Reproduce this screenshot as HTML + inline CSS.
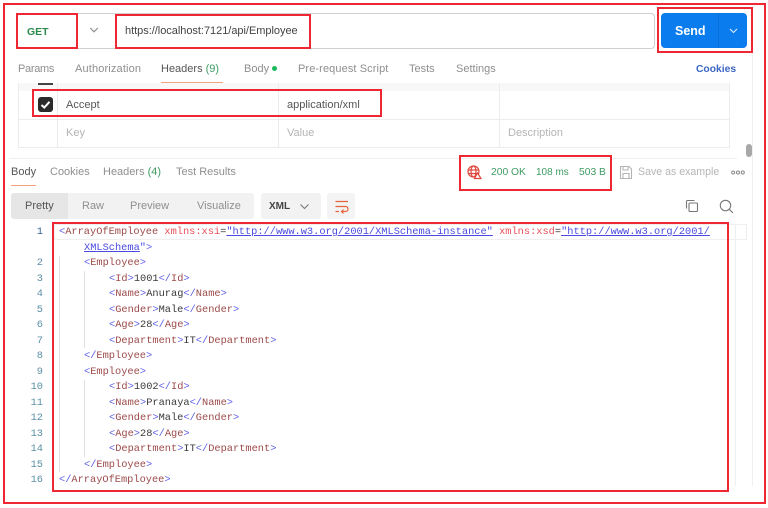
<!DOCTYPE html>
<html><head><meta charset="utf-8"><style>
html,body{margin:0;padding:0;background:#fff}
#p{position:relative;width:768px;height:508px;overflow:hidden;background:#fff;font-family:"Liberation Sans",sans-serif;font-size:11px;color:#6b6b6b;filter:blur(.3px)}
#p div,#p span.a{position:absolute;white-space:nowrap;box-sizing:border-box}
.r{border:2px solid #ee2733}
.t{line-height:14px;height:14px}
.g{color:#8f8f8f}
.l{left:0;width:43px;text-align:right;font:10.33px/15.5px "Liberation Mono",monospace;color:#5b8fa5;height:16px}
.c{font:10.33px/15.5px "Liberation Mono",monospace;height:16px;color:#3a3a3a}
.b{color:#5c5ce6}.n{color:#9c4a4a}.x{color:#e8505a}
.u{color:#4a4ae0;text-decoration:underline}
.h{background:#e6e6e6}
</style></head><body><div id="p">

<!-- URL bar -->
<div style="left:17px;top:13px;width:638px;height:36px;border:1px solid #d0d0d0;border-radius:4px"></div>
<div class="t" style="left:27px;top:24.5px;color:#2d8a4e;font-weight:bold;font-size:10.5px">GET</div>
<svg style="position:absolute;left:89px;top:27px" width="10" height="7"><path d="M1.2 1L5 4.8L8.8 1" fill="none" stroke="#8a8a8a" stroke-width="1.1"/></svg>
<div class="t" style="left:125px;top:24px;color:#444;font-size:11px;letter-spacing:-.03px">https://localhost:7121/api/Employee</div>

<!-- Send -->
<div style="left:661px;top:13px;width:86px;height:35px;background:#0b7ced;border-radius:4px"></div>
<div style="left:718px;top:13px;width:1px;height:35px;background:#0a6fd6"></div>
<div class="t" style="left:675px;top:24px;color:#fff;font-weight:bold;font-size:12.5px">Send</div>
<svg style="position:absolute;left:728px;top:27px" width="11" height="8"><path d="M2 2L5.5 5.5L9 2" fill="none" stroke="#dbeafc" stroke-width="1.1"/></svg>

<!-- Tabs -->
<div class="t g" style="left:18px;top:62px;letter-spacing:-.3px">Params</div>
<div class="t g" style="left:75px;top:62px;letter-spacing:.15px">Authorization</div>
<div class="t" style="left:161px;top:62px;color:#555">Headers <span style="color:#3f9b63">(9)</span></div>
<div style="left:161px;top:82px;width:62px;height:1px;background:#f5a27c"></div>
<div class="t g" style="left:244px;top:62px">Body</div>
<div style="left:272px;top:66px;width:5px;height:5px;border-radius:50%;background:#1ab85c"></div>
<div class="t g" style="left:298px;top:62px;letter-spacing:.1px">Pre-request Script</div>
<div class="t g" style="left:409px;top:62px">Tests</div>
<div class="t g" style="left:456px;top:62px">Settings</div>
<div class="t" style="left:696px;top:63px;color:#3b66c4;font-weight:bold;font-size:10.3px">Cookies</div>

<!-- Table -->
<div style="left:18px;top:83px;width:712px;height:65px;border:1px solid #ececec;border-top:0"></div>
<div style="left:19px;top:83px;width:710px;height:8px;background:#f8f8f8"></div>
<div style="left:19px;top:119px;width:710px;height:1px;background:#ececec"></div>
<div style="left:57px;top:83px;width:1px;height:64px;background:#ececec"></div>
<div style="left:278px;top:83px;width:1px;height:64px;background:#ececec"></div>
<div style="left:499px;top:83px;width:1px;height:64px;background:#ececec"></div>
<div style="left:38px;top:83px;width:15px;height:2px;background:#444"></div>
<div style="left:38px;top:97px;width:15px;height:15px;background:#2b2b2b;border-radius:3px"></div>
<svg style="position:absolute;left:38px;top:97px" width="15" height="15"><path d="M3.5 8L6.3 10.6L11.5 4.8" fill="none" stroke="#fff" stroke-width="2"/></svg>
<div class="t" style="left:66px;top:97.5px;color:#555">Accept</div>
<div class="t" style="left:287px;top:97.5px;color:#555">application/xml</div>
<div class="t" style="left:66px;top:126px;color:#b5b5b5">Key</div>
<div class="t" style="left:287px;top:126px;color:#b5b5b5">Value</div>
<div class="t" style="left:508px;top:126px;color:#b5b5b5">Description</div>

<!-- Scrollbar -->
<div style="left:746px;top:144px;width:6px;height:13px;background:#a8a8a8;border-radius:3px"></div>
<div style="left:9px;top:158px;width:728px;height:1px;background:#f0f0f0"></div>
<div style="left:752px;top:14px;width:1px;height:472px;background:#f0f0f0"></div>

<!-- Response tabs -->
<div class="t" style="left:11px;top:165px;color:#555">Body</div>
<div style="left:11px;top:185px;width:25px;height:1px;background:#f5a27c"></div>
<div class="t g" style="left:50px;top:165px">Cookies</div>
<div class="t g" style="left:103px;top:165px">Headers <span style="color:#3f9b63">(4)</span></div>
<div class="t g" style="left:176px;top:165px">Test Results</div>

<svg style="position:absolute;left:467px;top:165px" width="16" height="15" fill="none" stroke="#e0483e" stroke-width="1.2"><circle cx="6.5" cy="6.5" r="5.5"/><ellipse cx="6.5" cy="6.5" rx="2.5" ry="5.5"/><path d="M1 5H12M1 8.5H10"/><path d="M10.5 8L14 13.5H7.5Z" fill="#fff"/></svg>
<div class="t" style="left:491px;top:166px;color:#3f9b63;font-size:10.3px">200 OK</div>
<div class="t" style="left:536px;top:166px;color:#3f9b63;font-size:10px">108 ms</div>
<div class="t" style="left:579px;top:166px;color:#3f9b63;font-size:10.3px">503 B</div>
<svg style="position:absolute;left:619px;top:165px" width="14" height="15" fill="none" stroke="#b5b5b5" stroke-width="1.1"><path d="M1.5 1.5H10L12.5 4V13.5H1.5Z"/><path d="M4 1.5V5H9V1.5M4 13.5V8.5H10V13.5"/></svg>
<div class="t" style="left:638px;top:165px;color:#b5b5b5;font-size:10.6px">Save as example</div>
<svg style="position:absolute;left:731px;top:170px" width="14" height="5" fill="none" stroke="#8a8a8a" stroke-width="1"><circle cx="2.2" cy="2.5" r="1.5"/><circle cx="7" cy="2.5" r="1.5"/><circle cx="11.8" cy="2.5" r="1.5"/></svg>

<!-- Response toolbar -->
<div style="left:11px;top:193px;width:243px;height:26px;background:#f2f2f2;border-radius:3px"></div>
<div style="left:11px;top:193px;width:57px;height:26px;background:#e6e6e6;border-radius:3px 0 0 3px"></div>
<div class="t" style="left:25px;top:199px;color:#555">Pretty</div>
<div class="t g" style="left:82px;top:199px">Raw</div>
<div class="t g" style="left:130px;top:199px">Preview</div>
<div class="t g" style="left:197px;top:199px">Visualize</div>
<div style="left:261px;top:193px;width:60px;height:26px;background:#f2f2f2;border-radius:3px"></div>
<div class="t" style="left:269px;top:200px;color:#444;font-size:10px;font-weight:bold">XML</div>
<svg style="position:absolute;left:299px;top:203px" width="11" height="7"><path d="M1.5 1.5L5.5 5.5L9.5 1.5" fill="none" stroke="#777" stroke-width="1.1"/></svg>
<div style="left:327px;top:193px;width:28px;height:26px;background:#f4f4f4;border-radius:3px"></div>
<svg style="position:absolute;left:334px;top:200px" width="16" height="14" fill="none" stroke="#e8643c" stroke-width="1.2"><path d="M1.5 1.5H14M1.5 6.5H11.5a2.5 2.5 0 0 1 0 5H7.5M9.5 9.5L7.5 11.5L9.5 13.5M1.5 11.5H5"/></svg>
<svg style="position:absolute;left:685px;top:199px" width="14" height="14" fill="none" stroke="#777" stroke-width="1.1"><rect x="4" y="4" width="8.5" height="8.5" rx="1"/><path d="M9.5 1.5H2.5A1 1 0 0 0 1.5 2.5V9.5"/></svg>
<svg style="position:absolute;left:719px;top:199px" width="15" height="15" fill="none" stroke="#777" stroke-width="1.1"><circle cx="6.5" cy="6.5" r="5.2"/><path d="M10.3 10.3L14 14"/></svg>

<!-- Code -->
<div style="left:54px;top:224px;width:693px;height:16px;border:1px solid #efefef"></div>
<div style="left:59px;top:256px;width:1px;height:216px;background:#e2e2e2"></div>
<div style="left:84px;top:271px;width:1px;height:77px;background:#e2e2e2"></div>
<div style="left:84px;top:380px;width:1px;height:77px;background:#e2e2e2"></div>
<div style="left:735px;top:224px;width:1px;height:262px;background:#f0f0f0"></div>

<div class="l" style="top:225px;color:#2f5f8a">1</div>
<div class="c" style="left:59px;top:225px"><span class="b">&lt;</span><span class="n">ArrayOfEmployee</span> <span class="x">xmlns:xsi</span>=<span class="u">"http://www.w3.org/2001/XMLSchema-instance"</span> <span class="x">xmlns:xsd</span>=<span class="u">"http://www.w3.org/2001/</span></div>
<div class="c" style="left:84px;top:241px"><span class="u">XMLSchema</span><span class="u" style="text-decoration:none">"</span><span class="b">&gt;</span></div>

<div class="l" style="top:256px">2</div><div class="c" style="left:84px;top:256px"><span class="b">&lt;</span><span class="n">Employee</span><span class="b">&gt;</span></div>
<div class="l" style="top:272px">3</div><div class="c" style="left:109px;top:272px"><span class="b">&lt;</span><span class="n">Id</span><span class="b">&gt;</span>1001<span class="b">&lt;/</span><span class="n">Id</span><span class="b">&gt;</span></div>
<div class="l" style="top:287px">4</div><div class="c" style="left:109px;top:287px"><span class="b">&lt;</span><span class="n">Name</span><span class="b">&gt;</span>Anurag<span class="b">&lt;/</span><span class="n">Name</span><span class="b">&gt;</span></div>
<div class="l" style="top:303px">5</div><div class="c" style="left:109px;top:303px"><span class="b">&lt;</span><span class="n">Gender</span><span class="b">&gt;</span>Male<span class="b">&lt;/</span><span class="n">Gender</span><span class="b">&gt;</span></div>
<div class="l" style="top:318px">6</div><div class="c" style="left:109px;top:318px"><span class="b">&lt;</span><span class="n">Age</span><span class="b">&gt;</span>28<span class="b">&lt;/</span><span class="n">Age</span><span class="b">&gt;</span></div>
<div class="l" style="top:334px">7</div><div class="c" style="left:109px;top:334px"><span class="b">&lt;</span><span class="n">Department</span><span class="b">&gt;</span>IT<span class="b">&lt;/</span><span class="n">Department</span><span class="b">&gt;</span></div>
<div class="l" style="top:349px">8</div><div class="c" style="left:84px;top:349px"><span class="b">&lt;/</span><span class="n">Employee</span><span class="b">&gt;</span></div>
<div class="l" style="top:365px">9</div><div class="c" style="left:84px;top:365px"><span class="b">&lt;</span><span class="n">Employee</span><span class="b">&gt;</span></div>
<div class="l" style="top:380px">10</div><div class="c" style="left:109px;top:380px"><span class="b">&lt;</span><span class="n">Id</span><span class="b">&gt;</span>1002<span class="b">&lt;/</span><span class="n">Id</span><span class="b">&gt;</span></div>
<div class="l" style="top:396px">11</div><div class="c" style="left:109px;top:396px"><span class="b">&lt;</span><span class="n">Name</span><span class="b">&gt;</span>Pranaya<span class="b">&lt;/</span><span class="n">Name</span><span class="b">&gt;</span></div>
<div class="l" style="top:411px">12</div><div class="c" style="left:109px;top:411px"><span class="b">&lt;</span><span class="n">Gender</span><span class="b">&gt;</span>Male<span class="b">&lt;/</span><span class="n">Gender</span><span class="b">&gt;</span></div>
<div class="l" style="top:427px">13</div><div class="c" style="left:109px;top:427px"><span class="b">&lt;</span><span class="n">Age</span><span class="b">&gt;</span>28<span class="b">&lt;/</span><span class="n">Age</span><span class="b">&gt;</span></div>
<div class="l" style="top:442px">14</div><div class="c" style="left:109px;top:442px"><span class="b">&lt;</span><span class="n">Department</span><span class="b">&gt;</span>IT<span class="b">&lt;/</span><span class="n">Department</span><span class="b">&gt;</span></div>
<div class="l" style="top:458px">15</div><div class="c" style="left:84px;top:458px"><span class="b">&lt;/</span><span class="n">Employee</span><span class="b">&gt;</span></div>
<div class="l" style="top:473px">16</div><div class="c" style="left:59px;top:473px"><span class="b">&lt;/</span><span class="n">ArrayOfEmployee</span><span class="b">&gt;</span></div>

<!-- Red annotation boxes -->
<div class="r" style="left:3px;top:3px;width:763px;height:501px"></div>
<div class="r" style="left:16px;top:13px;width:62px;height:36px"></div>
<div class="r" style="left:115px;top:14px;width:196px;height:35px"></div>
<div class="r" style="left:657px;top:7px;width:96px;height:46px"></div>
<div class="r" style="left:32px;top:89px;width:350px;height:28px"></div>
<div class="r" style="left:459px;top:155px;width:153px;height:36px"></div>
<div class="r" style="left:52px;top:222px;width:677px;height:270px"></div>
</div></body></html>
